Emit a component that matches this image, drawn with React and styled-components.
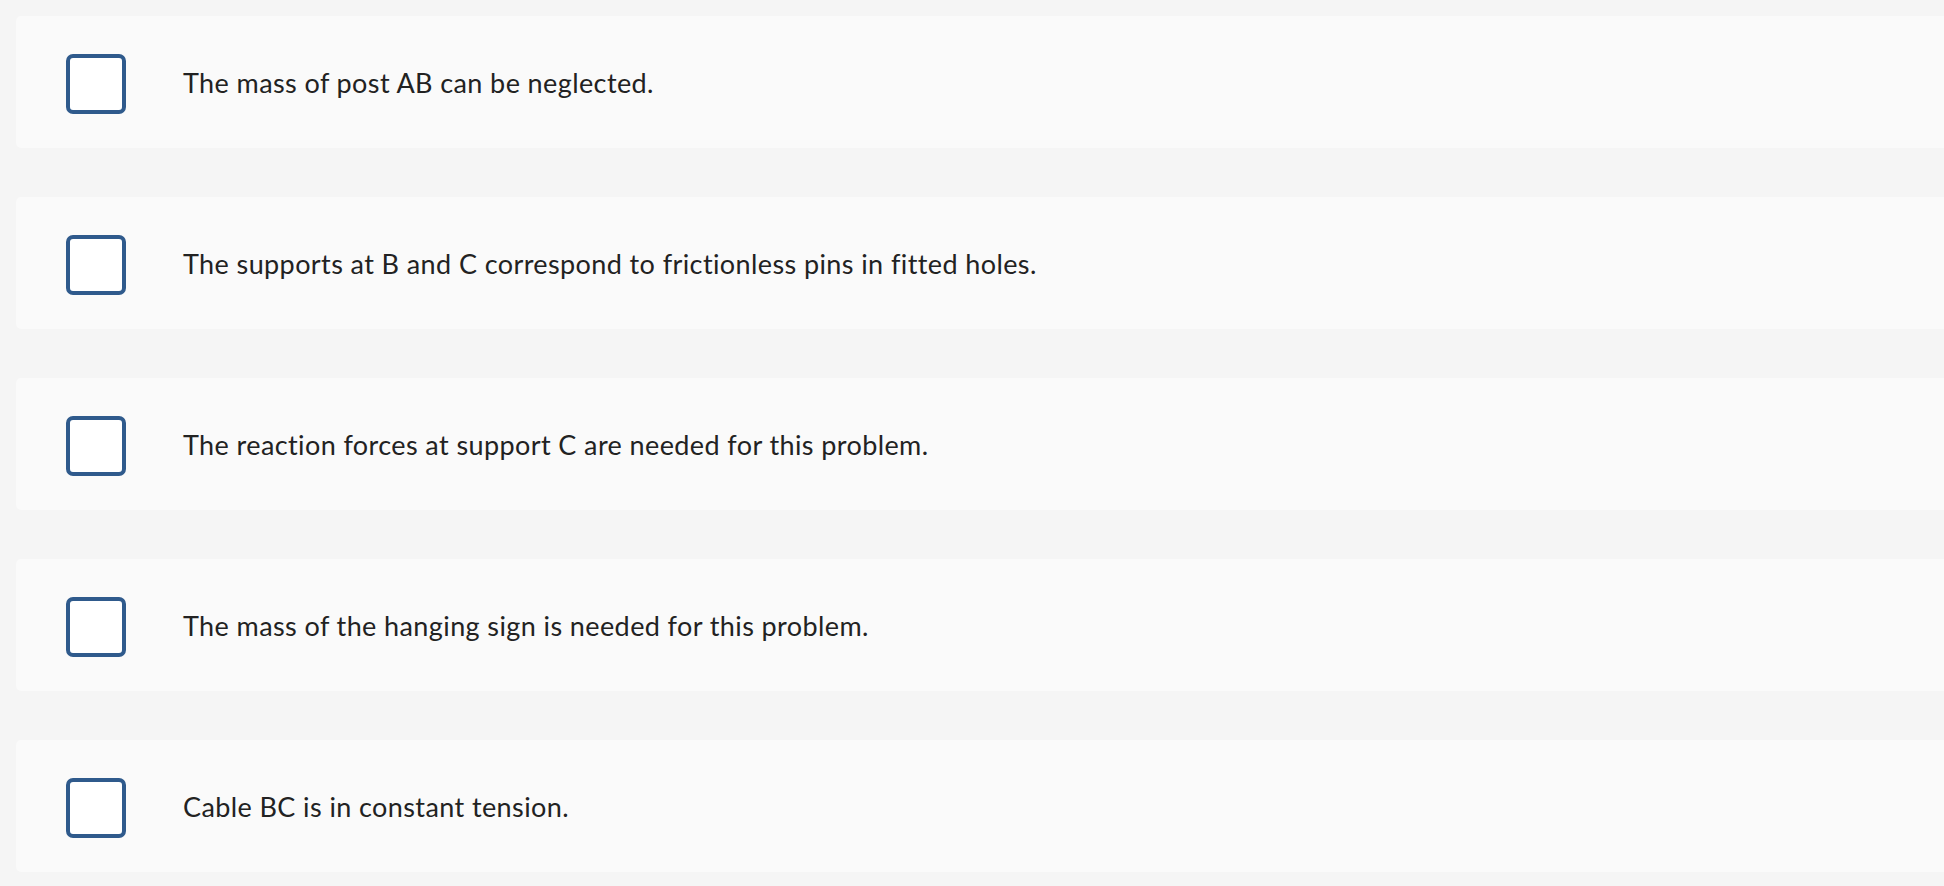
import React from "react";
import styled, { createGlobalStyle } from "styled-components";

const GlobalStyle = createGlobalStyle`
  html, body {
    margin: 0;
    padding: 0;
    background: #f5f5f5;
  }
  body {
    font-family: Lato, "Liberation Sans", Arial, sans-serif;
  }
`;

const List = styled.div`
  display: flex;
  flex-direction: column;
  gap: 49px;
  padding: 16px 0 0 16px;
`;

const Card = styled.label`
  display: flex;
  align-items: center;
  height: 132px;
  box-sizing: border-box;
  padding-left: 50px;
  background: #fafafa;
  border-radius: 5px 0 0 5px;
  cursor: pointer;
`;

const Box = styled.span`
  flex: none;
  width: 60px;
  height: 60px;
  box-sizing: border-box;
  border: 4px solid #2f5a8c;
  border-radius: 7px;
  background: #ffffff;
  margin-top: 4px;
`;

const Text = styled.span`
  margin-left: 57px;
  font-size: 27px;
  color: #222222;
  letter-spacing: 0.4px;
`;

const items = [
  "The mass of post AB can be neglected.",
  "The supports at B and C correspond to frictionless pins in fitted holes.",
  "The reaction forces at support C are needed for this problem.",
  "The mass of the hanging sign is needed for this problem.",
  "Cable BC is in constant tension.",
];

export default function App() {
  return (
    <>
      <GlobalStyle />
      <List>
        {items.map((t) => (
          <Card key={t}>
            <Box />
            <Text>{t}</Text>
          </Card>
        ))}
      </List>
    </>
  );
}
